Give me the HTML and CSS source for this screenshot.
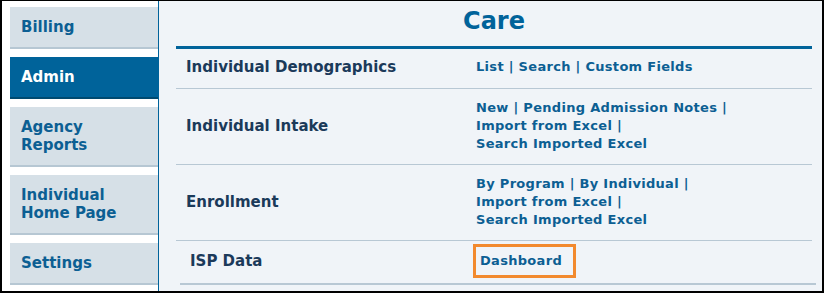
FILE: index.html
```html
<!DOCTYPE html>
<html lang="en">
<head>
    <meta charset="UTF-8">
    <meta name="viewport" content="width=device-width, initial-scale=1.0">
    <title>Care</title>
    <link rel="stylesheet" href="styles.css">
</head>
<body>
    <div class="frame">
        <div class="sidebar">
            <a class="nav-item">Billing</a>
            <a class="nav-item active">Admin</a>
            <a class="nav-item">Agency<br>Reports</a>
            <a class="nav-item">Individual<br>Home Page</a>
            <a class="nav-item">Settings</a>
        </div>
        <div class="main">
            <h1 class="title">Care</h1>
            <div class="menu">
                <div class="row">
                    <div class="label">Individual Demographics</div>
                    <div class="links"><a>List</a> | <a>Search</a> | <a>Custom Fields</a></div>
                </div>
                <div class="row">
                    <div class="label">Individual Intake</div>
                    <div class="links">
                        <a>New</a> | <a>Pending Admission Notes</a> |<br>
                        <a>Import from Excel</a> |<br>
                        <a>Search Imported Excel</a>
                    </div>
                </div>
                <div class="row">
                    <div class="label">Enrollment</div>
                    <div class="links">
                        <a>By Program</a> | <a>By Individual</a> |<br>
                        <a>Import from Excel</a> |<br>
                        <a>Search Imported Excel</a>
                    </div>
                </div>
            </div>
            <div class="menu last">
                <div class="row">
                    <div class="label">ISP Data</div>
                    <div class="links"><a class="highlight">Dashboard</a></div>
                </div>
            </div>
        </div>
    </div>
</body>
</html>
```

FILE: styles.css
```css
body {
    margin: 0;
    font-family: "DejaVu Sans", Verdana, sans-serif;
    font-weight: bold;
}
.frame {
    display: flex;
    width: 824px;
    height: 293px;
    box-sizing: border-box;
    border: 2px solid #000;
    border-top-width: 1px;
    overflow: hidden;
}
.sidebar {
    width: 157px;
    flex-shrink: 0;
    background: #fff;
    border-right: 1px solid #00639a;
    padding: 6px 0 0 8px;
    box-sizing: border-box;
    display: flex;
    flex-direction: column;
    gap: 8px;
}
.nav-item {
    display: block;
    background: #d6e0e7;
    border-bottom: 2px solid #b6c7d3;
    color: #0c5f93;
    font-size: 15px;
    line-height: 18px;
    padding: 11px 11px;
}
.nav-item.active {
    background: #00639a;
    border-bottom-color: #004a70;
    color: #fff;
}
.main {
    flex: 1;
    background: #f0f4f8;
    padding-top: 6px;
}
.title {
    margin: 0 10px 0 17px;
    text-align: center;
    font-size: 24px;
    line-height: 29px;
    color: #00639a;
    border-bottom: 3px solid #00639a;
    padding-bottom: 10px;
}
.menu {
    margin: 0 10px 0 17px;
}
.row {
    display: grid;
    grid-template-columns: 300px 1fr;
    align-items: center;
    border-bottom: 1px solid #b8c8d4;
    padding: 9px 0 12px;
}
.row + .row {
    padding: 10px 0 11px;
}
.label {
    padding-left: 10px;
    font-size: 15px;
    line-height: 18px;
    color: #1b3a5a;
}
.links {
    font-size: 13px;
    line-height: 18px;
    letter-spacing: 0.3px;
    color: #0c5f93;
}
.menu.last {
    margin: 0 6px 0 21px;
}
.menu.last .row {
    border-bottom: 2px solid #b8c8d4;
    padding: 3px 0 5px;
}
.highlight {
    display: inline-block;
    margin-left: -7px;
    width: 87px;
    padding: 0 6px 0 4px;
    line-height: 28px;
    border: 3px solid #f28a2e;
}
```
